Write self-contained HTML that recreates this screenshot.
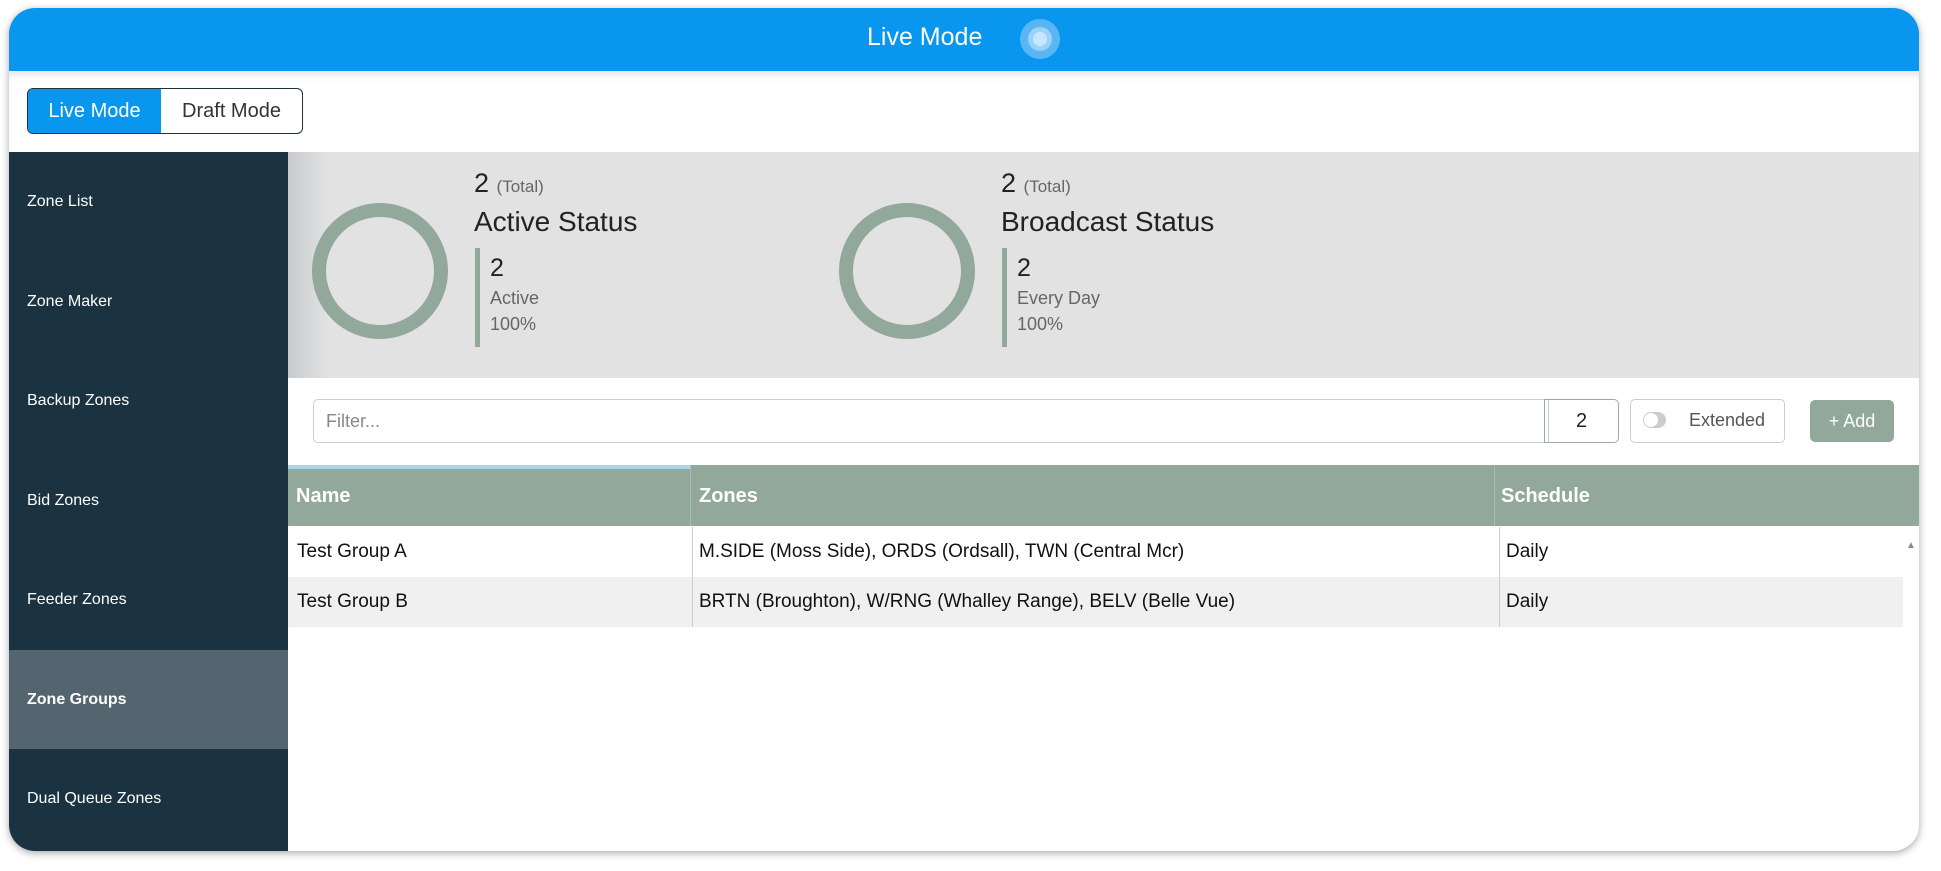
<!DOCTYPE html><html><head><style>
*{box-sizing:border-box;margin:0;padding:0}
body{width:1941px;height:871px;background:#fff;font-family:"Liberation Sans",sans-serif;position:relative;overflow:hidden}
.card{position:absolute;left:9px;top:8px;width:1910px;height:843px;border-radius:26px;overflow:hidden;box-shadow:0 2px 8px rgba(0,0,0,.35);background:#fff}
.hdr{position:absolute;left:0;top:0;width:100%;height:63px;background:#0896ee}
.abs{position:absolute}
.side{position:absolute;left:0;top:144px;width:279px;height:700px;background:#1b3340}
.side div{height:99.5px;line-height:99.5px;padding-left:18px;color:#fff;font-size:16px}
</style></head><body>
<div class="card">
<div class="hdr"></div>
<div class="abs" style="left:858px;top:15px;color:#fff;font-size:25px;">Live Mode</div>
<div class="abs" style="left:1011px;top:11px;width:40px;height:40px;border-radius:50%;background:#5ab6f3"></div>
<div class="abs" style="left:1019px;top:19px;width:24px;height:24px;border-radius:50%;background:#9ad3fa"></div>
<div class="abs" style="left:1024px;top:24px;width:14px;height:14px;border-radius:50%;background:#c8e7fc"></div>
<div class="abs" style="left:0;top:63px;width:100%;height:81px;box-shadow:inset 0 8px 10px -6px rgba(0,0,0,.15)"></div>
<div class="abs" style="left:18px;top:80px;width:276px;height:46px;border:1px solid #1b3340;border-radius:6px;overflow:hidden;display:flex;font-size:20px">
<div style="width:133px;background:#0896ee;color:#fff;text-align:center;line-height:44px">Live Mode</div>
<div style="flex:1;color:#333;text-align:center;line-height:44px">Draft Mode</div></div>
<div class="side"><div>Zone List</div><div>Zone Maker</div><div>Backup Zones</div><div>Bid Zones</div><div>Feeder Zones</div><div style="background:#54656f;font-weight:bold">Zone Groups</div><div>Dual Queue Zones</div></div>
<div class="abs" style="left:279px;top:144px;width:1631px;height:226px;background:#e2e2e2"></div>
<div class="abs" style="left:279px;top:144px;width:40px;height:226px;background:linear-gradient(90deg,#c8cbcd,#e2e2e2)"></div>
<div class="abs" style="left:303px;top:195px;width:136px;height:136px;border-radius:50%;border:14px solid #91a89a"></div>
<div class="abs" style="left:830px;top:195px;width:136px;height:136px;border-radius:50%;border:14px solid #91a89a"></div>
<div class="abs" style="left:465px;top:160px;color:#222;font-size:27px">2 <span style="font-size:17px;color:#666">(Total)</span></div>
<div class="abs" style="left:465px;top:198px;color:#222;font-size:28px">Active Status</div>
<div class="abs" style="left:466px;top:240px;width:5px;height:99px;background:#91a89a"></div>
<div class="abs" style="left:481px;top:246px;color:#222;font-size:25px">2</div>
<div class="abs" style="left:481px;top:280px;color:#666;font-size:18px">Active</div>
<div class="abs" style="left:481px;top:306px;color:#666;font-size:18px">100%</div>
<div class="abs" style="left:992px;top:160px;color:#222;font-size:27px">2 <span style="font-size:17px;color:#666">(Total)</span></div>
<div class="abs" style="left:992px;top:198px;color:#222;font-size:28px">Broadcast Status</div>
<div class="abs" style="left:993px;top:240px;width:5px;height:99px;background:#91a89a"></div>
<div class="abs" style="left:1008px;top:246px;color:#222;font-size:25px">2</div>
<div class="abs" style="left:1008px;top:280px;color:#666;font-size:18px">Every Day</div>
<div class="abs" style="left:1008px;top:306px;color:#666;font-size:18px">100%</div>
<div class="abs" style="left:304px;top:391px;width:1236px;height:44px;border:1px solid #c9ced3;border-radius:5px 0 0 5px;color:#888;font-size:18px;line-height:42px;padding-left:12px">Filter...</div>
<div class="abs" style="left:1535px;top:391px;width:75px;height:44px;border:1px solid #9aa;border-radius:0 5px 5px 0;color:#222;font-size:20px;line-height:42px;text-align:center">2</div>
<div class="abs" style="left:1621px;top:391px;width:155px;height:44px;border:1px solid #c9ced3;border-radius:5px;color:#555;font-size:18px;line-height:40px;padding-left:58px">Extended</div>
<div class="abs" style="left:1634px;top:404px;width:23px;height:16px;border-radius:8px;background:#ccc"></div>
<div class="abs" style="left:1635px;top:405px;width:14px;height:14px;border-radius:50%;background:#fff"></div>
<div class="abs" style="left:1801px;top:392px;width:84px;height:42px;border-radius:5px;background:#91a89a;color:#fff;font-size:18px;line-height:42px;text-align:center">+ Add</div>
<div class="abs" style="left:279px;top:457px;width:1631px;height:61px;background:#91a89a"></div>
<div class="abs" style="left:279px;top:457px;width:402px;height:4px;background:#a9d4ea"></div>
<div class="abs" style="left:681px;top:457px;width:1px;height:61px;background:#a8bcb0"></div>
<div class="abs" style="left:1485px;top:457px;width:1px;height:61px;background:#a8bcb0"></div>
<div class="abs" style="left:287px;top:477px;color:#fff;font-weight:bold;font-size:20px">Name</div>
<div class="abs" style="left:690px;top:477px;color:#fff;font-weight:bold;font-size:20px">Zones</div>
<div class="abs" style="left:1492px;top:477px;color:#fff;font-weight:bold;font-size:20px">Schedule</div>
<div class="abs" style="left:279px;top:569px;width:1615px;height:50px;background:#f0f0f0"></div>
<div class="abs" style="left:683px;top:519px;width:1px;height:100px;background:#ccc"></div>
<div class="abs" style="left:1490px;top:519px;width:1px;height:100px;background:#ccc"></div>
<div class="abs" style="left:288px;top:533px;color:#111;font-size:19px">Test Group A</div>
<div class="abs" style="left:690px;top:533px;color:#111;font-size:19px">M.SIDE (Moss Side), ORDS (Ordsall), TWN (Central Mcr)</div>
<div class="abs" style="left:1497px;top:533px;color:#111;font-size:19px">Daily</div>
<div class="abs" style="left:288px;top:583px;color:#111;font-size:19px">Test Group B</div>
<div class="abs" style="left:690px;top:583px;color:#111;font-size:19px">BRTN (Broughton), W/RNG (Whalley Range), BELV (Belle Vue)</div>
<div class="abs" style="left:1497px;top:583px;color:#111;font-size:19px">Daily</div>
<div class="abs" style="left:1897px;top:532px;color:#888;font-size:10px">▲</div>
</div>
</body></html>
